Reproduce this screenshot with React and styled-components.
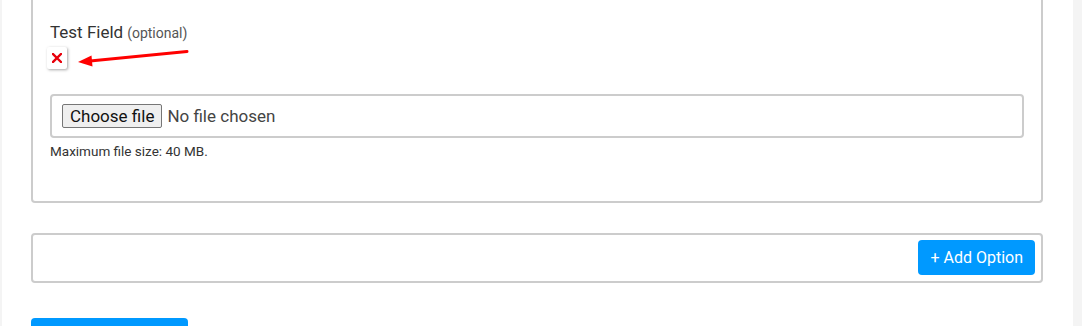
import React from 'react';
import styled, { createGlobalStyle } from 'styled-components';

const GlobalStyle = createGlobalStyle`
  body {
    margin: 0;
    background: #f4f4f4;
    font-family: Roboto, "Liberation Sans", Arial, sans-serif;
    color: #333;
  }
`;

const Page = styled.div`
  margin: 0 9px 0 2px;
  min-height: 326px;
  background: #fff;
  padding: 0 30px 0 29px;
  overflow: hidden;
`;

const FieldCard = styled.div`
  position: relative;
  border: 2px solid #ccc;
  border-top: none;
  border-radius: 0 0 4px 4px;
  padding: 21px 17px 42px;
`;

const Label = styled.div`
  font-size: 17px;
  line-height: 22px;
  color: #333;

  small {
    font-size: 14px;
    color: #555;
    margin-left: 4px;
  }
`;

const Broken = styled.div`
  margin: 3px 0 0 -3px;
  width: 20px;
  height: 22px;
  background: #fff;
  border-radius: 2px;
  box-shadow: 1px 1px 3px rgba(0, 0, 0, 0.35);
  display: flex;
  align-items: center;
  justify-content: center;
`;

const Arrow = styled.svg`
  position: absolute;
  left: 41px;
  top: 46px;
`;

const FileBox = styled.label`
  margin-top: 25px;
  border: 2px solid #ccc;
  border-radius: 4px;
  padding: 8px 10px 8px;
  display: flex;
  align-items: center;
  gap: 5px;
  font-size: 17px;
  color: #444;
  cursor: pointer;

  input {
    display: none;
  }
`;

const ChooseButton = styled.span`
  height: 24px;
  box-sizing: border-box;
  padding: 0 7px;
  display: flex;
  align-items: center;
  background: #efefef;
  border: 1px solid #767676;
  border-radius: 2px;
  color: #111;
`;

const Help = styled.div`
  margin-top: 6px;
  font-size: 13.5px;
  line-height: 15px;
  color: #333;
`;

const OptionsCard = styled.div`
  margin-top: 30px;
  border: 2px solid #ccc;
  border-radius: 4px;
  padding: 5px 6px 6px;
  display: flex;
  justify-content: flex-end;
`;

const BlueButton = styled.button`
  height: ${(p) => (p.$big ? '40px' : '35px')};
  width: ${(p) => (p.$big ? '157px' : 'auto')};
  padding: 0 12px;
  border: none;
  border-radius: 4px;
  background: #0099ff;
  color: #fff;
  font-family: Roboto, "Liberation Sans", Arial, sans-serif;
  font-size: 16px;
  cursor: pointer;
`;

const Footer = styled.div`
  margin-top: 35px;
`;

export default function App() {
  return (
    <>
      <GlobalStyle />
      <Page>
        <FieldCard>
          <Label>
            Test Field<small>(optional)</small>
          </Label>
          <Broken>
            <svg width="10" height="10" viewBox="0 0 10 10">
              <path d="M1 1L9 9M9 1L1 9" stroke="#e8000b" strokeWidth="2.4" strokeLinecap="square" />
            </svg>
          </Broken>
          <Arrow width="118" height="24" viewBox="0 0 118 24">
            <line x1="113" y1="5.5" x2="16" y2="14.9" stroke="#f00" strokeWidth="3" strokeLinecap="round" />
            <polygon points="4,16 18.5,20.5 17.5,9.5" fill="#f00" />
          </Arrow>
          <FileBox>
            <input type="file" />
            <ChooseButton>Choose file</ChooseButton>
            <span>No file chosen</span>
          </FileBox>
          <Help>Maximum file size: 40 MB.</Help>
        </FieldCard>
        <OptionsCard>
          <BlueButton>+ Add Option</BlueButton>
        </OptionsCard>
        <Footer>
          <BlueButton $big aria-label="Save" />
        </Footer>
      </Page>
    </>
  );
}
